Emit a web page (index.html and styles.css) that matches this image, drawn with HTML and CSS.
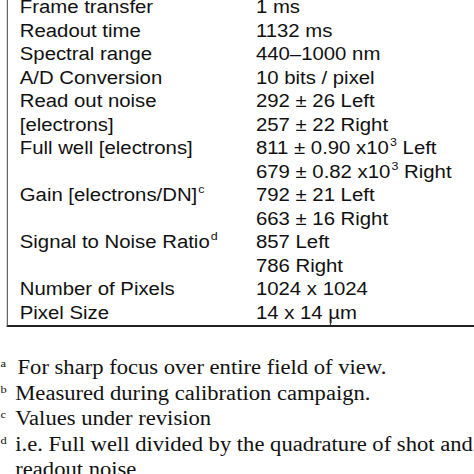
FILE: index.html
```html
<!DOCTYPE html>
<html>
<head>
<meta charset="utf-8">
<link rel="stylesheet" href="styles.css">
</head>
<body>
<div class="page">
<div class="table">
  <div class="row"><div class="k">Frame transfer</div><div class="v">1 ms</div></div>
  <div class="row"><div class="k">Readout time</div><div class="v">1132 ms</div></div>
  <div class="row"><div class="k">Spectral range</div><div class="v">440–1000 nm</div></div>
  <div class="row"><div class="k">A/D Conversion</div><div class="v">10 bits / pixel</div></div>
  <div class="row"><div class="k">Read out noise<br>[electrons]</div><div class="v">292 ± 26 Left<br>257 ± 22 Right</div></div>
  <div class="row"><div class="k">Full well [electrons]</div><div class="v">811 ± 0.90 x10<sup>3</sup> Left<br>679 ± 0.82 x10<sup>3</sup> Right</div></div>
  <div class="row"><div class="k">Gain [electrons/DN]<sup>c</sup></div><div class="v">792 ± 21 Left<br>663 ± 16 Right</div></div>
  <div class="row"><div class="k">Signal to Noise Ratio<sup>d</sup></div><div class="v">857 Left<br>786 Right</div></div>
  <div class="row"><div class="k">Number of Pixels</div><div class="v">1024 x 1024</div></div>
  <div class="row last"><div class="k">Pixel Size</div><div class="v">14 x 14 µm</div></div>
</div>
<div class="notes">
  <div class="note"><span class="m">a</span><span class="t first">For sharp focus over entire field of view.</span></div>
  <div class="note"><span class="m">b</span><span class="t">Measured during calibration campaign.</span></div>
  <div class="note"><span class="m">c</span><span class="t">Values under revision</span></div>
  <div class="note"><span class="m">d</span><span class="t">i.e. Full well divided by the quadrature of shot and<br>readout noise</span></div>
</div>
</div>
</body>
</html>
```
FILE: styles.css
```css
html, body {
  margin: 0;
  padding: 0;
  background: #fff;
}
body {
  width: 474px;
  height: 474px;
  overflow: hidden;
}
.page {
  width: 420px;
  transform: scaleX(1.13);
  transform-origin: 0 0;
}
.table {
  margin-top: -4px;
  margin-left: 5.8px;
  width: 470px;
  border-left: 1.5px solid #555;
  border-bottom: 2px solid #222;
  font-family: "Liberation Sans", Arial, sans-serif;
  font-size: 18px;
  line-height: 23.5px;
  color: #111;
}
.row {
  display: grid;
  grid-template-columns: 209px 1fr;
  padding-left: 10.7px;
}
.row.last {
  position: relative;
}
.row.last::after {
  content: "";
  position: absolute;
  left: 285px;
  bottom: 0;
  width: 1px;
  height: 4px;
  background: #333;
}
.table sup {
  font-size: 11px;
  line-height: 0;
  vertical-align: 0;
  position: relative;
  top: -8px;
  margin-left: 1px;
}
.notes {
  margin-top: 28px;
  font-family: "Liberation Serif", "Times New Roman", serif;
  font-size: 20px;
  line-height: 25.5px;
  color: #111;
}
.note {
  display: flex;
}
.m {
  width: 13px;
  flex: none;
  font-size: 11px;
  line-height: 11px;
  padding-left: 0.5px;
  padding-top: 3px;
}
.t {
  white-space: nowrap;
}
.t.first {
  margin-left: 2px;
}
```
